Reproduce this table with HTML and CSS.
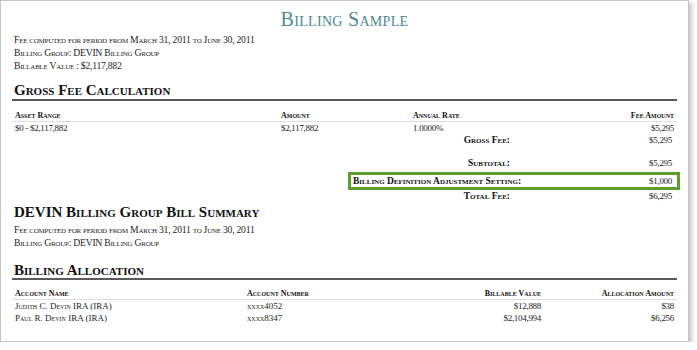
FILE: index.html
```html
<!DOCTYPE html>
<html>
<head>
<meta charset="utf-8">
<link rel="stylesheet" href="styles.css">
</head>
<body>
<div class="card">
  <h1 class="title">Billing Sample</h1>
  <div class="meta">
    <p>Fee computed for period from March 31, 2011 to June 30, 2011</p>
    <p>Billing Group: DEVIN Billing Group</p>
    <p>Billable Value : $2,117,882</p>
  </div>

  <h2 class="section first">Gross Fee Calculation</h2>
  <div class="grid fee-grid">
    <div class="row head">
      <span>Asset Range</span><span>Amount</span><span>Annual Rate</span><span class="r">Fee Amount</span>
    </div>
    <div class="row">
      <span class="num">$0 - $2,117,882</span><span class="num">$2,117,882</span><span class="num">1.0000%</span><span class="r num">$5,295</span>
    </div>
  </div>
  <div class="summary">
    <div class="srow"><span class="lbl">Gross Fee:</span><span class="val">$5,295</span></div>
    <div class="srow gap"><span class="lbl">Subtotal:</span><span class="val">$5,295</span></div>
    <div class="srow boxed"><span class="lbl">Billing Definition Adjustment Setting:</span><span class="val">$1,000</span></div>
    <div class="srow"><span class="lbl">Total Fee:</span><span class="val">$6,295</span></div>
  </div>

  <h2 class="section group">DEVIN Billing Group Bill Summary</h2>
  <div class="meta">
    <p>Fee computed for period from March 31, 2011 to June 30, 2011</p>
    <p>Billing Group: DEVIN Billing Group</p>
  </div>

  <h2 class="section alloc">Billing Allocation</h2>
  <div class="grid alloc-grid">
    <div class="row head">
      <span>Account Name</span><span>Account Number</span><span class="r">Billable Value</span><span class="r">Allocation Amount</span>
    </div>
    <div class="row">
      <span>Judith C. Devin IRA (IRA)</span><span>xxxx4052</span><span class="r num">$12,888</span><span class="r num">$38</span>
    </div>
    <div class="row">
      <span>Paul R. Devin IRA (IRA)</span><span>xxxx8347</span><span class="r num">$2,104,994</span><span class="r num">$6,256</span>
    </div>
  </div>
</div>
</body>
</html>
```

FILE: styles.css
```css
html, body {
  margin: 0;
  padding: 0;
  background: #ffffff;
}

body {
  font-family: "Liberation Serif", "DejaVu Serif", serif;
  font-variant: small-caps;
  color: #1e1e1e;
}

.card {
  box-sizing: border-box;
  width: 689px;
  height: 342px;
  border: 1px solid #c4c4c4;
  padding: 6px 11px 0 11px;
  box-shadow: 3px 3px 4px rgba(0, 0, 0, 0.22);
  background: #fff;
}

.title {
  margin: 0;
  font-size: 20px;
  line-height: 24px;
  font-weight: normal;
  text-align: center;
  color: #4b8a94;
  letter-spacing: 0.3px;
}

.meta {
  margin-top: 2px;
  padding-left: 2px;
}

.meta p {
  margin: 0;
  font-size: 9.7px;
  line-height: 13px;
  letter-spacing: -0.25px;
  color: #1e1e1e;
}

.section {
  margin: 0;
  font-size: 15px;
  line-height: 17px;
  font-weight: bold;
  color: #111;
  padding-left: 2px;
}

.section.first {
  margin-top: 10px;
  border-bottom: 2px solid #5a5a5a;
}

.section.group {
  margin-top: -1px;
}

.section.alloc {
  margin-top: 13px;
  line-height: 16px;
  border-bottom: 2px solid #5a5a5a;
}

.grid {
  padding: 0 3px 0 3px;
}

.fee-grid {
  margin-top: 9px;
}

.alloc-grid {
  margin-top: 8px;
}

.row {
  display: grid;
  font-size: 9px;
  line-height: 12px;
  color: #1e1e1e;
}

.num {
  letter-spacing: -0.3px;
}

.fee-grid .row {
  grid-template-columns: 266px 132px 1fr auto;
}

.alloc-grid .row {
  grid-template-columns: 232px 1fr 120px 133px;
}

.row.head {
  font-size: 8px;
  line-height: 11px;
  font-weight: bold;
  color: #111;
  border-bottom: 1px solid #dedede;
  margin: 0 -3px;
  padding: 0 3px;
}

.r {
  text-align: right;
}

.summary {
  margin-left: 336px;
  margin-right: -3px;
}

.srow {
  display: grid;
  grid-template-columns: 157px 1fr;
  font-size: 9px;
  line-height: 12px;
  border: 3px solid transparent;
  padding: 0 5px 0 2px;
  margin-top: -3px;
}

.srow.gap {
  margin-top: 5px;
}

.srow.boxed {
  border-color: #5e9e2e;
  margin-top: 0;
}

.lbl {
  text-align: right;
  font-weight: bold;
  font-size: 9.5px;
  color: #111;
  white-space: nowrap;
}

.val {
  text-align: right;
  letter-spacing: -0.3px;
  color: #1e1e1e;
}
```
